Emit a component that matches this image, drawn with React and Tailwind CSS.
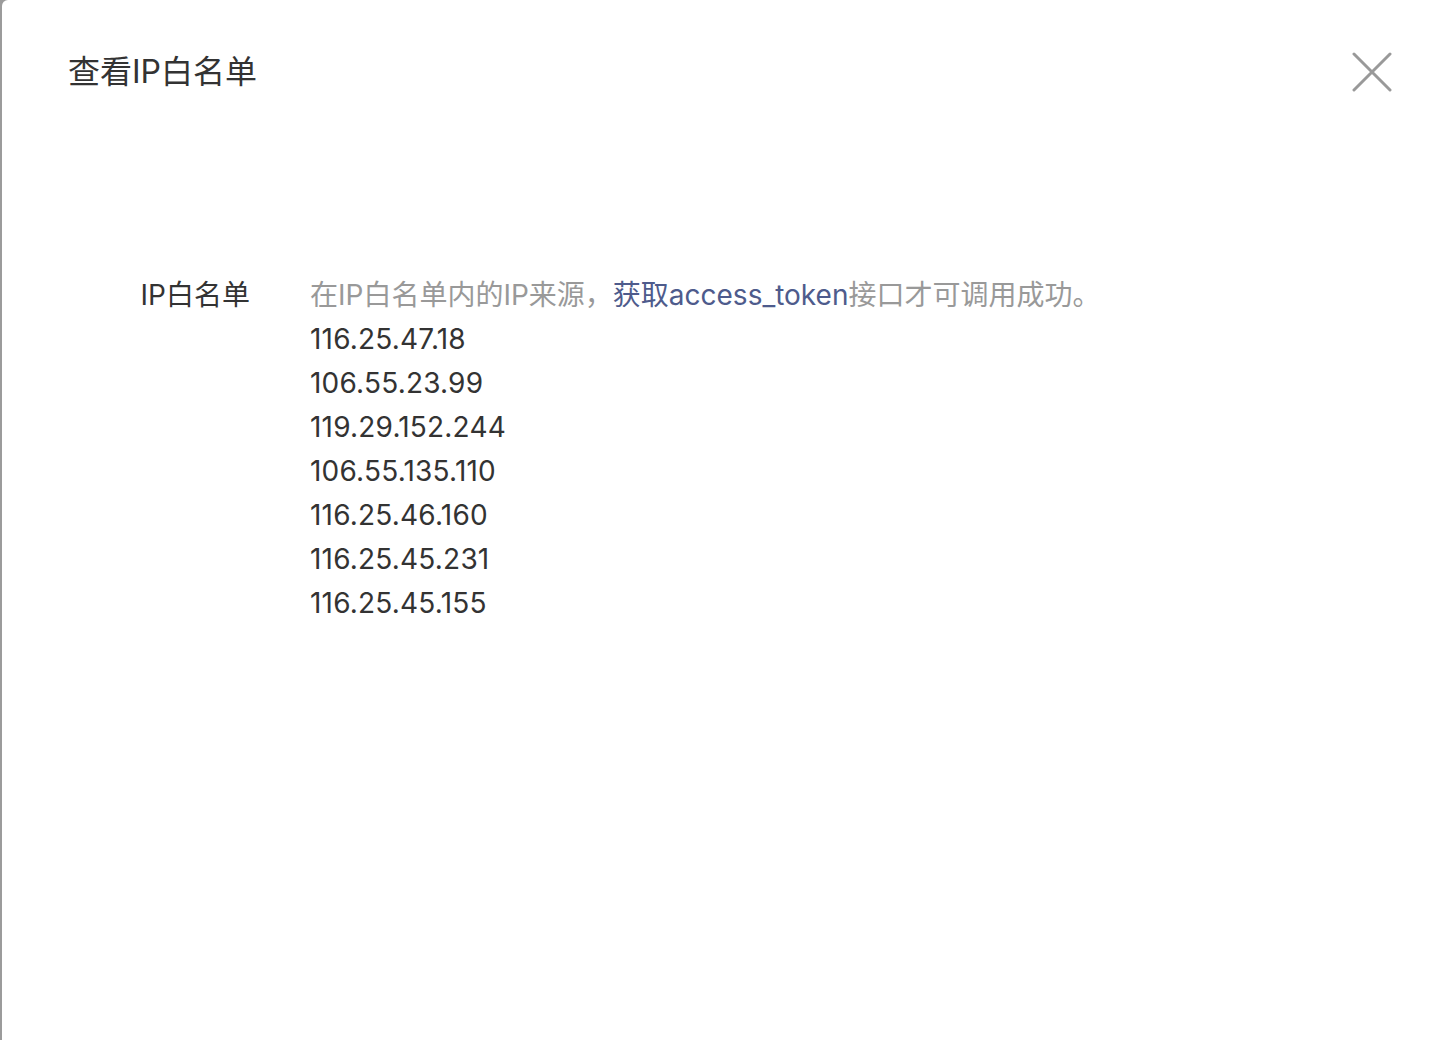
export default function App() {
  const ips = [
    "116.25.47.18",
    "106.55.23.99",
    "119.29.152.244",
    "106.55.135.110",
    "116.25.46.160",
    "116.25.45.231",
    "116.25.45.155",
  ];
  return (
    <div className="flex h-[1040px] w-[1446px] overflow-hidden bg-[#9b9b9b] font-['Inter','Noto_Sans_CJK_SC',sans-serif]">
      <div className="relative ml-[2px] flex-1 rounded-tl-[6px] bg-white">
        <div className="flex h-[144px] items-start justify-between pl-[66px] pr-[54px] pt-[51px]">
          <h1 className="text-[32px] leading-[42px] text-[#333333]">查看IP白名单</h1>
          <button className="mt-[1px] h-[40px] w-[40px] text-[#999999]" aria-label="close">
            <svg viewBox="0 0 40 40" className="h-[40px] w-[40px]">
              <path d="M2 2 L38 38 M38 2 L2 38" stroke="currentColor" strokeWidth="3" strokeLinecap="round" fill="none" />
            </svg>
          </button>
        </div>
        <div className="mt-[129px] flex text-[28px] leading-[44px]">
          <div className="w-[248px] text-right text-[#333333]">IP白名单</div>
          <div className="ml-[60px] flex flex-col">
            <div className="text-[#999999]">
              在IP白名单内的IP来源，<span className="text-[#4e5b8c]">获取access_token</span>接口才可调用成功。
            </div>
            {ips.map((ip) => (
              <div key={ip} className="tracking-[0.2px] text-[#333333]">{ip}</div>
            ))}
          </div>
        </div>
      </div>
    </div>
  );
}
